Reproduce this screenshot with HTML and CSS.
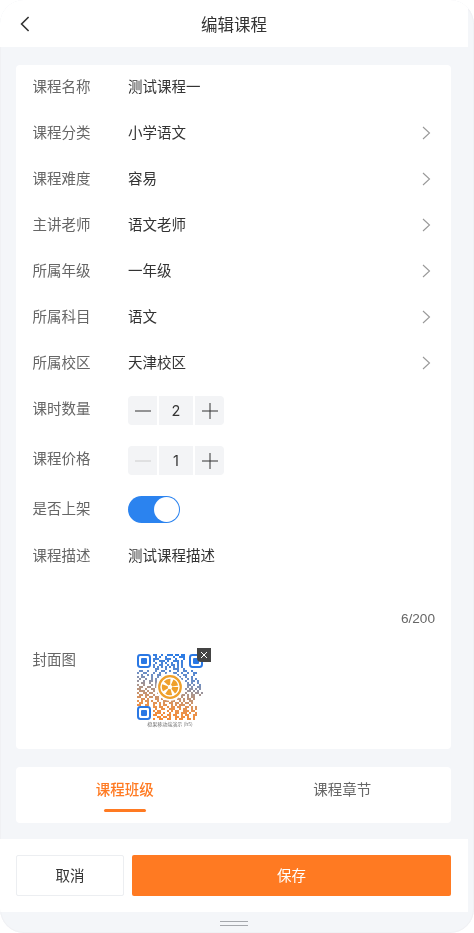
FILE: index.html
```html
<!DOCTYPE html>
<html lang="zh-CN">
<head>
<meta charset="utf-8">
<title>编辑课程</title>
<link rel="stylesheet" href="styles.css">
</head>
<body>
<div class="phone">
  <header class="topbar">
    <svg class="back" width="10" height="16" viewBox="0 0 10 16"><path d="M8.6 1 1.6 8l7 7"/></svg>
    <h1 class="title">编辑课程</h1>
  </header>
  <main class="content">
    <section class="card form">
      <div class="row"><span class="label">课程名称</span><span class="value">测试课程一</span></div>
      <div class="row"><span class="label">课程分类</span><span class="value">小学语文</span><svg class="chev" width="9" height="14" viewBox="0 0 9 14"><path d="M1 1l6.5 6L1 13"/></svg></div>
      <div class="row"><span class="label">课程难度</span><span class="value">容易</span><svg class="chev" width="9" height="14" viewBox="0 0 9 14"><path d="M1 1l6.5 6L1 13"/></svg></div>
      <div class="row"><span class="label">主讲老师</span><span class="value">语文老师</span><svg class="chev" width="9" height="14" viewBox="0 0 9 14"><path d="M1 1l6.5 6L1 13"/></svg></div>
      <div class="row"><span class="label">所属年级</span><span class="value">一年级</span><svg class="chev" width="9" height="14" viewBox="0 0 9 14"><path d="M1 1l6.5 6L1 13"/></svg></div>
      <div class="row"><span class="label">所属科目</span><span class="value">语文</span><svg class="chev" width="9" height="14" viewBox="0 0 9 14"><path d="M1 1l6.5 6L1 13"/></svg></div>
      <div class="row"><span class="label">所属校区</span><span class="value">天津校区</span><svg class="chev" width="9" height="14" viewBox="0 0 9 14"><path d="M1 1l6.5 6L1 13"/></svg></div>

      <div class="row-top first-step">
        <span class="label">课时数量</span>
        <div class="stepper">
          <span class="step-btn"><svg width="16" height="16" viewBox="0 0 16 16"><path d="M0 8h16"/></svg></span>
          <span class="step-num">2</span>
          <span class="step-btn"><svg width="16" height="16" viewBox="0 0 16 16"><path d="M0 8h16M8 0v16"/></svg></span>
        </div>
      </div>
      <div class="row-top second-step">
        <span class="label">课程价格</span>
        <div class="stepper">
          <span class="step-btn disabled"><svg width="16" height="16" viewBox="0 0 16 16"><path d="M0 8h16"/></svg></span>
          <span class="step-num">1</span>
          <span class="step-btn"><svg width="16" height="16" viewBox="0 0 16 16"><path d="M0 8h16M8 0v16"/></svg></span>
        </div>
      </div>
      <div class="row switch-row">
        <span class="label">是否上架</span>
        <span class="switch"><span class="knob"></span></span>
      </div>
      <div class="row desc-row"><span class="label">课程描述</span><span class="value">测试课程描述</span></div>
      <div class="count">6/200</div>
      <div class="row-top cover-row">
        <span class="label">封面图</span>
        <div class="cover">
          <svg class="qr" width="66" height="66" viewBox="0 0 33 33">
            <defs>
              <linearGradient id="qrfill" gradientUnits="userSpaceOnUse" x1="20" y1="0" x2="14" y2="33">
                <stop offset="0" stop-color="#2a7be6"/>
                <stop offset=".38" stop-color="#6f8fc4"/>
                <stop offset=".55" stop-color="#a9948c"/>
                <stop offset=".8" stop-color="#e8924e"/>
                <stop offset="1" stop-color="#f58a35"/>
              </linearGradient>
            </defs>
            <path class="modules" d="M8 .5h2m2 0h1m2 0h3m1 0h2m1 0h2
M9 1.5h1m1 0h1m2 0h1m3 0h1m2 0h3
M8 2.5h3m3 0h3m2 0h1m3 0h1
M8 3.5h1m2 0h3m1 0h1m2 0h3m1 0h1
M9 4.5h1m2 0h1m1 0h1m2 0h1m2 0h1m1 0h1
M8 5.5h1m2 0h2m2 0h1m1 0h2m1 0h1m1 0h1
M8 6.5h1m1 0h1m1 0h1m1 0h1m1 0h1m1 0h1m1 0h1m1 0h1
M9 7.5h2m3 0h1m3 0h3m2 0h1
M1 8.5h2m2 0h1m3 0h1m2 0h2m2 0h1m3 0h1m2 0h2m2 0h1
M0 9.5h1m2 0h2m3 0h1m2 0h1m2 0h1m3 0h2m2 0h1m2 0h1m2 0h2
M2 10.5h1m2 0h1m1 0h1m2 0h2m3 0h1m1 0h1m2 0h1m2 0h2m3 0h1
M0 11.5h1m1 0h2m3 0h1m2 0h1m1 0h1m2 0h1m3 0h1m1 0h1m2 0h1m2 0h1
M1 12.5h1m2 0h1m2 0h1m1 0h1m12 0h1m2 0h1m1 0h1m1 0h1
M0 13.5h1m2 0h1m2 0h2m1 0h1m14 0h1m2 0h2m1 0h1
M2 14.5h2m2 0h1m2 0h1m15 0h1m1 0h1m2 0h1
M0 15.5h1m2 0h1m3 0h1m1 0h1m15 0h2m1 0h1m2 0h1
M1 16.5h2m2 0h2m2 0h1m15 0h1m1 0h1m2 0h2
M0 17.5h2m2 0h1m2 0h2m15 0h1m1 0h2m1 0h1m1 0h1
M1 18.5h3m1 0h1m2 0h1m1 0h1m14 0h2m1 0h1m1 0h1
M0 19.5h1m2 0h2m1 0h2m2 0h1m13 0h1m2 0h1m1 0h2m1 0h1
M1 20.5h2m1 0h2m2 0h1m2 0h2m9 0h2m1 0h1m1 0h2m2 0h1
M0 21.5h2m2 0h1m1 0h2m1 0h2m2 0h2m1 0h1m2 0h2m1 0h1m2 0h1m1 0h2
M2 22.5h2m1 0h1m3 0h2m1 0h1m1 0h2m2 0h1m1 0h2m1 0h1m1 0h2m1 0h1
M0 23.5h1m1 0h1m1 0h2m1 0h1m2 0h1m2 0h3m1 0h2m2 0h1m1 0h1m2 0h2
M1 24.5h2m2 0h1m2 0h2m1 0h1m1 0h1m2 0h2m1 0h2m1 0h1m1 0h2m1 0h1
M0 25.5h2m2 0h2m2 0h1m2 0h1m1 0h2m2 0h1m1 0h1m1 0h3m2 0h1
M8 26.5h2m1 0h2m2 0h1m1 0h2m1 0h2m2 0h2m1 0h1m1 0h1
M9 27.5h1m2 0h2m2 0h3m2 0h1m1 0h2m2 0h1m1 0h1
M8 28.5h1m1 0h2m3 0h1m1 0h1m1 0h2m2 0h3m1 0h2
M9 29.5h3m1 0h1m2 0h1m2 0h2m1 0h3m1 0h1m2 0h1
M8 30.5h2m2 0h1m2 0h2m1 0h2m2 0h1m1 0h2m2 0h2
M10 31.5h2m1 0h2m1 0h1m2 0h2m1 0h2m1 0h1m2 0h1
M8 32.5h1m2 0h2m2 0h2m2 0h1m1 0h2m2 0h2m1 0h1"/>
            <g class="finder"><rect x=".5" y=".5" width="6" height="6" rx="1.2"/><rect x="26.5" y=".5" width="6" height="6" rx="1.2"/><rect x=".5" y="26.5" width="6" height="6" rx="1.2"/></g>
            <g class="finder-dot"><rect x="2" y="2" width="3" height="3" rx=".5"/><rect x="28" y="2" width="3" height="3" rx=".5"/><rect x="2" y="28" width="3" height="3" rx=".5"/></g>
            <circle class="logo-bg" cx="16.5" cy="16.5" r="6.9"/>
            <circle class="logo-ring" cx="16.5" cy="16.5" r="5.4"/>
            <circle class="logo-seg" cx="16.5" cy="16.5" r="2.6"/>
          </svg>
          <span class="qr-caption">橙果移动端演示 (h5)</span>
          <span class="close"><svg width="8" height="8" viewBox="0 0 8 8"><path d="M1 1l6 6M7 1 1 7"/></svg></span>
        </div>
      </div>
    </section>
    <nav class="card tabs">
      <span class="tab active">课程班级</span>
      <span class="tab">课程章节</span>
    </nav>
  </main>
  <footer class="actions">
    <button class="btn cancel" type="button">取消</button>
    <button class="btn save" type="button">保存</button>
  </footer>
  <div class="handle-bar"><span class="handle"></span></div>
</div>
</body>
</html>
```

FILE: styles.css
```css
* { box-sizing: border-box; }
html, body { margin: 0; padding: 0; background: #fff; }
body { font-family: "Noto Sans CJK SC", sans-serif; font-size: 14.5px; }

.phone {
  width: 474px;
  height: 933px;
  display: flex;
  flex-direction: column;
  background: #f4f6f9;
  border-radius: 24px;
  overflow: hidden;
  padding-right: 6px;
  box-shadow: inset 0 0 0 1px #f0f1f4;
  will-change: transform;
}

.topbar {
  flex: none;
  height: 47px;
  background: #fff;
  display: flex;
  align-items: center;
  justify-content: center;
  position: relative;
}
.title { margin: 0; font-size: 16.5px; font-weight: 400; color: #333; }
.back { position: absolute; left: 20px; top: 16px; }
.back path { fill: none; stroke: #333; stroke-width: 1.6; }

.content { flex: 1; padding: 18px 17px 0 16px; display: flex; flex-direction: column; gap: 18px; }
.card { background: #fff; border-radius: 4px; }
.form { height: 684px; padding: 0 16px 0 16.5px; }

.row { height: 44px; margin-bottom: 2px; display: flex; align-items: center; }
.row .label, .row .value { padding-bottom: 2px; }
.row-top { display: flex; align-items: flex-start; }
.label { flex: none; width: 95.5px; color: #666; line-height: 24px; }
.value { flex: 1; color: #333; line-height: 24px; }
.chev { flex: none; margin-right: 4px; }
.chev path { fill: none; stroke: #999; stroke-width: 1.1; }

.first-step { margin-top: 11px; }
.second-step { margin-top: 21px; }
.switch-row { margin-top: 12px; height: 44px; }
.desc-row { margin-top: 3px; }

.stepper { display: flex; gap: 2px; height: 29px; }
.step-btn {
  width: 29px;
  display: flex;
  align-items: center;
  justify-content: center;
  background: #f3f4f6;
}
.step-btn:first-child { border-radius: 4px 0 0 4px; }
.step-btn:last-child { border-radius: 0 4px 4px 0; }
.step-btn path { stroke: #333; stroke-width: 1; fill: none; }
.step-btn.disabled path { stroke: #ccc; }
.step-num {
  width: 34px;
  background: #f3f4f6;
  color: #333;
  font-family: "Inter", sans-serif;
  font-size: 14.5px;
  line-height: 29px;
  text-align: center;
}

.switch {
  width: 52px;
  height: 27px;
  border-radius: 14px;
  background: #2b83ef;
  display: flex;
  justify-content: flex-end;
  align-items: center;
  padding-right: 1px;
}
.knob { width: 25px; height: 25px; border-radius: 50%; background: #fff; }

.count {
  margin-top: 31px;
  text-align: right;
  color: #666;
  font-family: "Liberation Sans", sans-serif;
  font-size: 13.6px;
  line-height: 20px;
}

.cover-row { margin-top: 18px; }
.cover {
  position: relative;
  width: 84px;
  height: 90px;
  margin-top: 1px;
  padding: 6px 9px 0;
  display: flex;
  flex-direction: column;
  align-items: center;
}
.qr { display: block; flex: none; }
.modules { fill: none; stroke: url(#qrfill); stroke-width: .9; }
.finder rect { fill: none; stroke: #2a78e4; stroke-width: 1; }
.finder-dot rect { fill: #2a78e4; }
.logo-bg { fill: #fff; }
.logo-ring { fill: none; stroke: #efa02c; stroke-width: 1.1; }
.logo-seg { fill: none; stroke: #efa02c; stroke-width: 3; stroke-dasharray: 2.3 .97; }
.qr-caption { font-size: 5px; line-height: 8px; color: #777; white-space: nowrap; }
.close {
  position: absolute;
  top: 0;
  right: 1px;
  width: 14px;
  height: 14px;
  background: #444;
  border-radius: 0 0 0 4px;
  display: flex;
  align-items: center;
  justify-content: center;
}
.close path { stroke: #fff; stroke-width: 1; fill: none; }

.tabs { height: 56px; display: flex; }
.tab {
  flex: 1;
  position: relative;
  text-align: center;
  color: #666;
  line-height: 44px;
}
.tab.active { color: #ff7a22; font-weight: 500; }
.tab.active::after {
  content: "";
  position: absolute;
  left: 50%;
  bottom: 11px;
  width: 42px;
  height: 3px;
  margin-left: -21px;
  border-radius: 2px;
  background: #ff7a22;
}

.actions {
  flex: none;
  height: 73px;
  padding: 16px 17px 16px 16px;
  background: #fff;
  display: flex;
  gap: 8px;
}
.btn { height: 41px; border-radius: 2px; font: inherit; padding: 0 0 2px; }
.cancel { width: 108px; background: #fff; border: 1px solid #eceef1; color: #333; }
.save { flex: 1; background: #ff7a22; border: 0; color: #fff; }

.handle-bar { flex: none; height: 21px; display: flex; justify-content: center; padding-top: 9px; }
.handle {
  width: 28px;
  height: 5px;
  border-top: 1px solid #a5a8ad;
  border-bottom: 1px solid #a5a8ad;
}
```
